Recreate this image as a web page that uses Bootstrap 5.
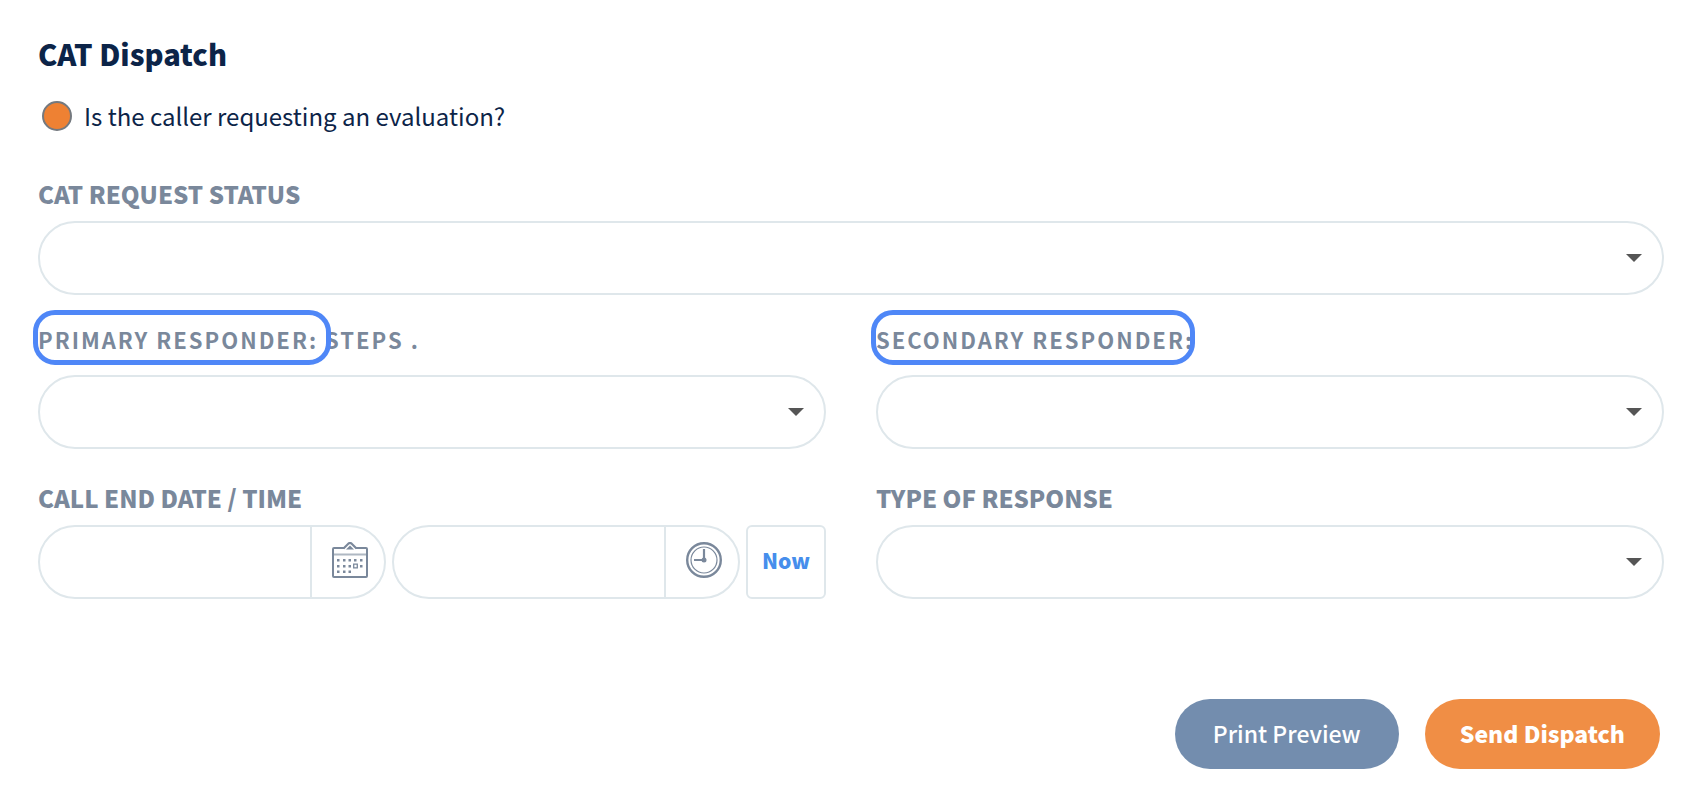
<!DOCTYPE html>
<html lang="en">
<head>
<meta charset="utf-8">
<meta name="viewport" content="width=device-width, initial-scale=1">
<title>CAT Dispatch</title>
<link href="https://cdn.jsdelivr.net/npm/bootstrap@5.3.0/dist/css/bootstrap.min.css" rel="stylesheet">
<style>
  :root {
    --ink: #0c2448;
    --muted-ink: #7a889b;
    --line: #dfe7eb;
    --ring: #4f87f7;
  }
  body {
    font-family: "Noto Sans CJK JP", "Noto Sans", sans-serif;
    color: var(--ink);
    background: #fff;
  }
  .dispatch-form { padding: 30px 42px 22px 38px; }
  .dispatch-title { font-size: 29px; line-height: 46px; font-weight: 900; margin-bottom: 20px; }
  .question { gap: 12px; padding-left: 4px; margin-bottom: 40px; font-size: 24px; line-height: 40px; }
  .question .form-check-input {
    width: 30px; height: 30px; margin: 0; border: 2px solid #74797f;
  }
  .question .form-check-input:checked { background-color: #ee8133; background-image: none; }
  .fields { --bs-gutter-x: 50px; }
  .field-label {
    display: block; font-size: 24px; line-height: 36px; font-weight: 900;
    color: var(--muted-ink); margin-bottom: 9px;
  }
  .spaced-label { font-size: 22px; font-weight: 700; letter-spacing: 2px; margin-bottom: 18px; }
  .ringed { position: relative; white-space: pre; }
  .ringed::after {
    content: ""; position: absolute; inset: -13px -1px -10px -5px;
    border: 5px solid var(--ring); border-radius: 22px; pointer-events: none;
  }
  .ringed-wide::after { right: -6px; }
  .pill {
    height: 74px; border: 2px solid var(--line); border-radius: 37px; background-color: #fff;
    font-size: 24px; color: var(--ink);
  }
  select.pill {
    padding: 0 56px 0 28px;
    background-image: url("data:image/svg+xml,%3Csvg xmlns='http://www.w3.org/2000/svg' viewBox='0 0 16 8'%3E%3Cpath d='M0 0h16L8 8z' fill='%23555'/%3E%3C/svg%3E");
    background-size: 16px 8px; background-position: right 20px center;
  }
  .when { gap: 6px; }
  .when .form-control { border: 0; background: transparent; height: 100%; font-size: 24px; padding: 0 12px 0 28px; min-width: 0; }
  .picker-btn {
    flex: 0 0 74px; border: 0; border-left: 2px solid var(--line); background: transparent;
    padding: 0 0 4px 4px; color: var(--muted-ink);
  }
  .now-btn {
    flex: 0 0 80px; border: 2px solid var(--line); border-radius: 6px; padding: 0 0 2px;
    font-size: 21px; font-weight: 900; color: #468eec;
  }
  .gap-after-status { margin-bottom: 26px; }
  .gap-after-responder { margin-bottom: 31px; }
  .actions { gap: 26px; margin-top: 100px; padding-right: 4px; }
  .actions .btn { height: 70px; border: 0; border-radius: 35px; font-size: 23px; color: #fff; }
  .btn-preview, .btn-preview:hover { background: #738dae; font-weight: 500; padding: 0 38px 2px; }
  .btn-send, .btn-send:hover { background: #f08e45; font-weight: 900; padding: 0 35px 2px; }
</style>
</head>
<body>
<form class="dispatch-form">
  <h1 class="dispatch-title">CAT Dispatch</h1>

  <div class="question d-flex align-items-center">
    <input class="form-check-input flex-shrink-0" type="radio" id="evaluation" name="evaluation" checked>
    <label for="evaluation">Is the caller requesting an evaluation?</label>
  </div>

  <div class="gap-after-status">
    <label class="field-label" for="status">CAT REQUEST STATUS</label>
    <select class="form-select pill" id="status"><option></option></select>
  </div>

  <div class="row fields gap-after-responder">
    <div class="col-6">
      <label class="field-label spaced-label" for="primary"><span class="ringed ringed-wide">PRIMARY RESPONDER: </span>STEPS .</label>
      <select class="form-select pill" id="primary"><option></option></select>
    </div>
    <div class="col-6">
      <label class="field-label spaced-label" for="secondary"><span class="ringed">SECONDARY RESPONDER:</span></label>
      <select class="form-select pill" id="secondary"><option></option></select>
    </div>
  </div>

  <div class="row fields">
    <div class="col-6">
      <label class="field-label" for="end-date">CALL END DATE / TIME</label>
      <div class="when d-flex">
        <div class="pill d-flex flex-fill overflow-hidden">
          <input class="form-control" type="text" id="end-date">
          <button class="picker-btn d-flex align-items-center justify-content-center" type="button" aria-label="Choose date">
            <svg width="36" height="36" viewBox="0 0 36 36" fill="none" stroke="currentColor">
              <path d="M12 6H2Q1 6 1 7V34Q1 35 2 35H34Q35 35 35 34V7Q35 6 34 6H24" stroke-width="2"/>
              <path d="M11.500 6.500L16.500 1.500Q18 .5 19.500 1.500L24.500 6.500" stroke-width="2.200"/>
              <path d="M14 7.500L18 3.500L22 7.500Z" fill="currentColor" stroke="none"/>
              <path d="M1 12.500H35" stroke-width="2" opacity=".6"/>
              <g fill="currentColor" stroke="none">
                <path d="M5 17h2.500v2.500H5zM11 17h2.500v2.500H11zM16.500 17H19v2.500h-2.500zM22 17h2.500v2.500H22zM28 17h2.500v2.500H28z"/>
                <path d="M5 23h2.500v2.500H5zM11 23h2.500v2.500H11zM16.500 23H19v2.500h-2.500zM28 23h2.500v2.500H28z"/>
                <path d="M5 28.500h2.500V31H5zM11 28.500h2.500V31H11zM16.500 28.500H19V31h-2.500z"/>
              </g>
              <path d="M21.700 22.200h3.600v3.600h-3.600z" stroke-width="1.300"/>
            </svg>
          </button>
        </div>
        <div class="pill d-flex flex-fill overflow-hidden">
          <input class="form-control" type="text" id="end-time" aria-label="Call end time">
          <button class="picker-btn d-flex align-items-center justify-content-center" type="button" aria-label="Choose time">
            <svg width="36" height="36" viewBox="0 0 36 36" fill="none" stroke="currentColor">
              <circle cx="18" cy="18" r="16.800" stroke-width="2.400"/>
              <circle cx="18" cy="18" r="13" stroke-width="1.200"/>
              <path d="M18 7V18H8" stroke-width="2.200"/>
              <circle cx="18" cy="18" r="2.500" fill="currentColor" stroke="none"/>
            </svg>
          </button>
        </div>
        <button class="btn now-btn" type="button">Now</button>
      </div>
    </div>
    <div class="col-6">
      <label class="field-label" for="response">TYPE OF RESPONSE</label>
      <select class="form-select pill" id="response"><option></option></select>
    </div>
  </div>

  <div class="actions d-flex justify-content-end">
    <button class="btn btn-preview" type="button">Print Preview</button>
    <button class="btn btn-send" type="submit">Send Dispatch</button>
  </div>
</form>
<script src="https://cdn.jsdelivr.net/npm/bootstrap@5.3.0/dist/js/bootstrap.bundle.min.js"></script>
</body>
</html>
